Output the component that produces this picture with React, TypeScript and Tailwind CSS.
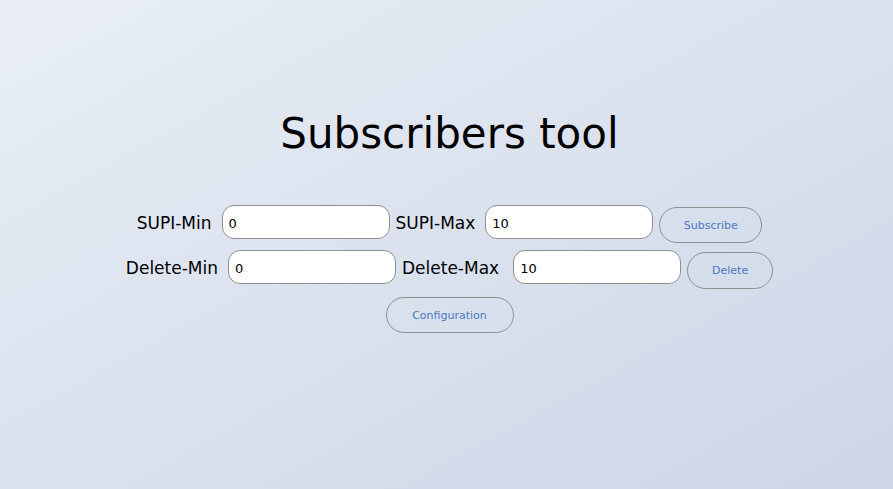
export default function App() {
  return (
    <div
      className="min-h-screen w-full bg-gradient-to-br from-[#e9eef6] to-[#ccd6e6] text-black"
      style={{ fontFamily: '"Century Gothic", "DejaVu Sans", sans-serif' }}
    >
      <div className="flex flex-col items-center pl-[6px] pt-[106px]">
        <h1 className="text-[42px] leading-[56px] font-normal">Subscribers tool</h1>

        <div className="mt-[43px] flex items-start">
          <label className="mr-[10px] h-[34px] pt-[3px] flex items-center text-[17px]">SUPI-Min</label>
          <input
            defaultValue="0"
            className="mr-[6px] h-[34px] w-[168px] rounded-[12px] border border-[#8f8f8f] bg-white px-[6px] pt-[2px] text-[13px] outline-none"
          />
          <label className="mr-[10px] h-[34px] pt-[3px] flex items-center text-[17px]">SUPI-Max</label>
          <input
            defaultValue="10"
            className="mr-[6px] h-[34px] w-[168px] rounded-[12px] border border-[#8f8f8f] bg-white px-[6px] pt-[2px] text-[13px] outline-none"
          />
          <button className="mt-[2px] h-[36px] w-[103px] rounded-full border border-[#8f8f8f] pt-[2px] text-[11px] text-[#4a78c2]">
            Subscribe
          </button>
        </div>

        <div className="mt-[7px] flex items-start">
          <label className="mr-[10px] h-[34px] pt-[3px] flex items-center text-[17px]">Delete-Min</label>
          <input
            defaultValue="0"
            className="mr-[6px] h-[34px] w-[168px] rounded-[12px] border border-[#8f8f8f] bg-white px-[6px] pt-[2px] text-[13px] outline-none"
          />
          <label className="mr-[14px] h-[34px] pt-[3px] flex items-center text-[17px]">Delete-Max</label>
          <input
            defaultValue="10"
            className="mr-[6px] h-[34px] w-[168px] rounded-[12px] border border-[#8f8f8f] bg-white px-[6px] pt-[2px] text-[13px] outline-none"
          />
          <button className="mt-[2px] h-[37px] w-[86px] rounded-full border border-[#8f8f8f] pt-[2px] text-[11px] text-[#4a78c2]">
            Delete
          </button>
        </div>

        <button className="mt-[8px] h-[36px] w-[128px] rounded-full border border-[#8f8f8f] pt-[2px] text-[11px] text-[#4a78c2]">
          Configuration
        </button>
      </div>
    </div>
  );
}
